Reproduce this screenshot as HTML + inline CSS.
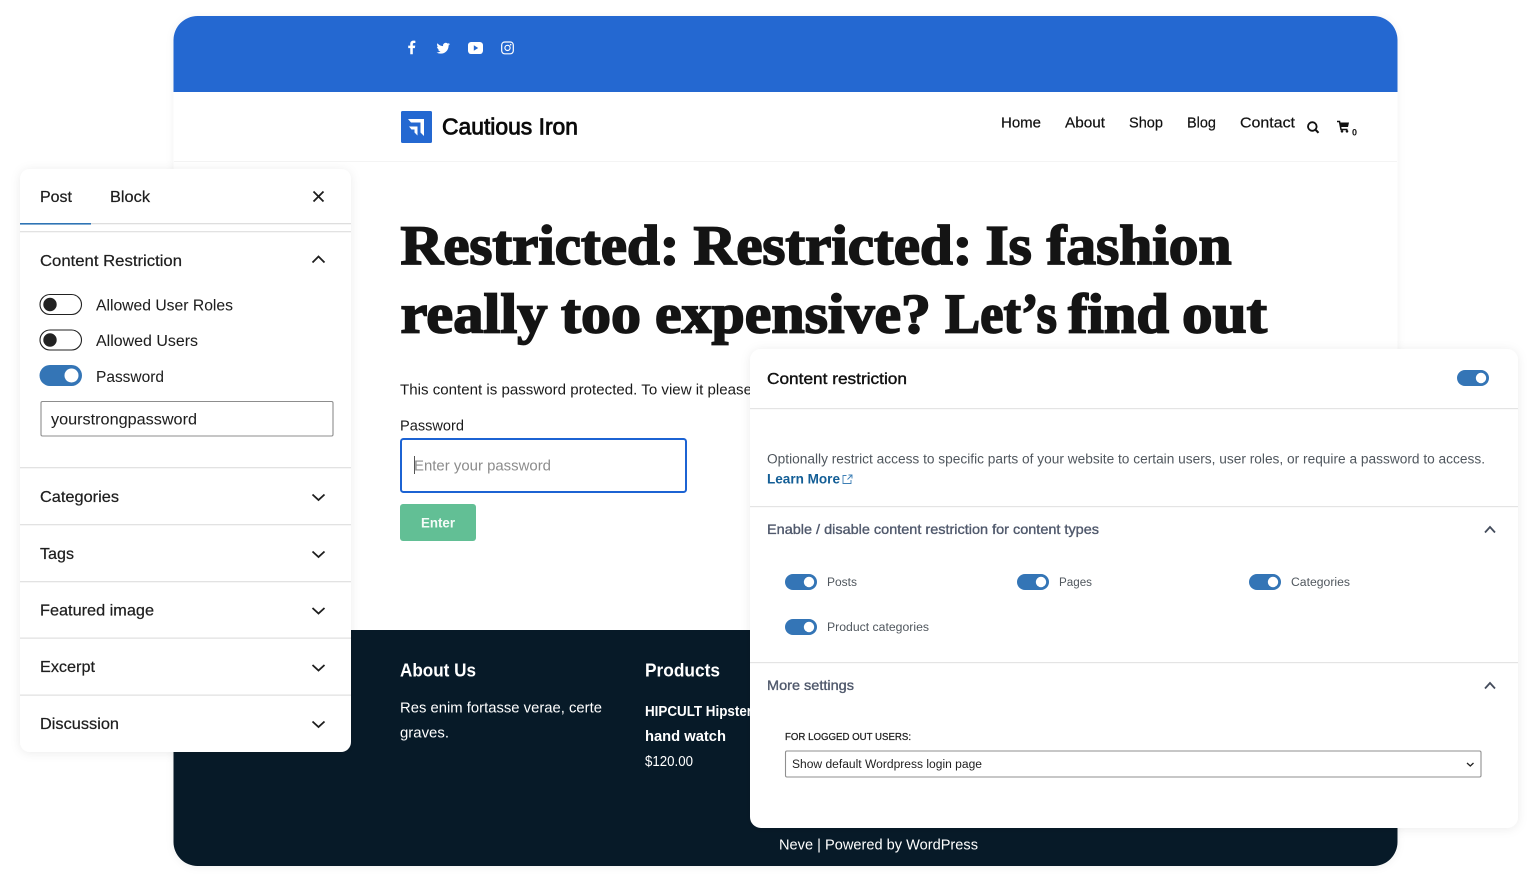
<!DOCTYPE html>
<html lang="en">
<head>
<meta charset="utf-8">
<title>Cautious Iron</title>
<style>
html,body{margin:0;padding:0;background:#fff;width:1536px;height:888px;overflow:hidden}
svg{display:block}
text{font-family:"Liberation Sans",sans-serif;fill:#1a1a1a}
.h{font-family:"Liberation Serif",serif;font-weight:700;font-size:56px;fill:#141414;stroke:#141414;stroke-width:1.7px}
.nav{font-size:15px;fill:#111;stroke:#111;stroke-width:.2px}
.p{font-size:16px;fill:#1e1e1e;stroke:#1e1e1e;stroke-width:.22px}
.w{fill:#fff}
.g{fill:#50575e}
.s{fill:#50596c;font-size:14px;stroke:#50596c;stroke-width:.35px}
.c{fill:none;stroke:#1e1e1e;stroke-width:1.8}
.c2{fill:none;stroke:#444c5c;stroke-width:1.8}
</style>
</head>
<body>
<svg width="1536" height="888" viewBox="0 0 1536 888" xmlns="http://www.w3.org/2000/svg">
<defs>
<filter id="sh" x="-10%" y="-10%" width="120%" height="120%"><feDropShadow dx="0" dy="1" stdDeviation="5" flood-color="#000" flood-opacity=".08"/></filter>
<filter id="sh2" x="-5%" y="-5%" width="110%" height="110%"><feDropShadow dx="0" dy="1" stdDeviation="4" flood-color="#000" flood-opacity=".06"/></filter>
</defs>

<!-- Site card -->
<rect x="173.500" y="16" width="1224" height="850" rx="24" fill="#fff" filter="url(#sh2)"/>
<path d="M173.500 92V40a24 24 0 0 1 24-24H1373.500a24 24 0 0 1 24 24V92z" fill="#2468d1"/>
<path d="M173.500 630H1397.500V842a24 24 0 0 1-24 24H197.500a24 24 0 0 1-24-24z" fill="#071a28"/>
<rect x="174" y="161" width="1223" height="1" fill="#f4f4f4"/>

<!-- Social icons -->
<path transform="translate(403.500 40) scale(.98)" fill="#fff" d="M9.500 14.500V8.300h2.100l.4-2.500H9.500V4.300c0-.8.2-1.300 1.300-1.300h1.300V.8C11.800.8 11 .7 10.100.7 8.200.7 6.900 1.900 6.900 4v1.800H4.800v2.500h2.100v6.200z"/>
<path transform="translate(436.500 41.500) scale(.56)" fill="#fff" d="M23.950 4.570a10 10 0 0 1-2.820.77 4.960 4.960 0 0 0 2.160-2.720 9.900 9.900 0 0 1-3.120 1.180 4.920 4.920 0 0 0-8.380 4.480A13.980 13.980 0 0 1 1.640 3.160a4.920 4.920 0 0 0 1.520 6.570 4.900 4.900 0 0 1-2.230-.61v.06a4.920 4.920 0 0 0 3.950 4.830 5 5 0 0 1-2.210.08 4.940 4.940 0 0 0 4.600 3.420A9.870 9.870 0 0 1 0 19.540a13.940 13.940 0 0 0 7.550 2.210c9.050 0 14-7.500 14-13.980 0-.21 0-.42-.02-.63a9.940 9.940 0 0 0 2.460-2.550z"/>
<rect x="468" y="42" width="15" height="12" rx="3.200" fill="#fff"/>
<path d="M473.800 45.300v5.400l4.400-2.700z" fill="#2468d1"/>
<rect x="501.700" y="42" width="11.600" height="11.800" rx="3" fill="none" stroke="#fff" stroke-width="1.200"/>
<circle cx="507.500" cy="47.900" r="2.600" fill="none" stroke="#fff" stroke-width="1.200"/>
<circle cx="510.700" cy="44.700" r=".8" fill="#fff"/>

<!-- Logo -->
<rect x="401" y="111" width="31" height="32" rx="1.500" fill="#2468d1"/>
<path d="M408 119H424V136L420.500 132.500V122.500H411z" fill="#fff"/>
<path d="M409 126.500H417.500V135.500L414.500 132.500V129.500H411.500z" fill="#fff"/>
<text x="442" y="134.500" font-size="23" textLength="136" lengthAdjust="spacingAndGlyphs" style="fill:#0b0b0b;stroke:#0b0b0b;stroke-width:.8px">Cautious Iron</text>

<!-- Nav -->
<text class="nav" x="1001" y="127.500" textLength="40" lengthAdjust="spacingAndGlyphs">Home</text>
<text class="nav" x="1065" y="127.500" textLength="40" lengthAdjust="spacingAndGlyphs">About</text>
<text class="nav" x="1129" y="127.500" textLength="34" lengthAdjust="spacingAndGlyphs">Shop</text>
<text class="nav" x="1187" y="127.500" textLength="29" lengthAdjust="spacingAndGlyphs">Blog</text>
<text class="nav" x="1240" y="127.500" textLength="55" lengthAdjust="spacingAndGlyphs">Contact</text>
<circle cx="1312.300" cy="126.500" r="4.300" fill="none" stroke="#111" stroke-width="1.800"/>
<path d="M1315.300 129.500L1318.500 132.800" stroke="#111" stroke-width="2.100" fill="none"/>
<path d="M1337 121.500H1339.500L1341 129.500H1347.500" fill="none" stroke="#111" stroke-width="1.500"/>
<path d="M1340 122.500H1349L1348 127H1341z" fill="#111"/>
<circle cx="1342" cy="131.300" r="1.300" fill="#111"/>
<circle cx="1347" cy="131.300" r="1.300" fill="#111"/>
<text x="1352" y="135.500" font-size="9" font-weight="700" style="fill:#111">0</text>

<!-- Heading -->
<text class="h" x="400.500" y="264" textLength="279" lengthAdjust="spacingAndGlyphs">Restricted:</text>
<text class="h" x="693.500" y="264" textLength="279" lengthAdjust="spacingAndGlyphs">Restricted:</text>
<text class="h" x="985.500" y="264" textLength="246" lengthAdjust="spacingAndGlyphs">Is fashion</text>
<text class="h" x="400.500" y="332.500" textLength="147" lengthAdjust="spacingAndGlyphs">really</text>
<text class="h" x="561" y="332.500" textLength="80" lengthAdjust="spacingAndGlyphs">too</text>
<text class="h" x="655" y="332.500" textLength="276" lengthAdjust="spacingAndGlyphs">expensive?</text>
<text class="h" x="945" y="332.500" textLength="112" lengthAdjust="spacingAndGlyphs">Let’s</text>
<text class="h" x="1068" y="332.500" textLength="101" lengthAdjust="spacingAndGlyphs">find</text>
<text class="h" x="1182" y="332.500" textLength="85" lengthAdjust="spacingAndGlyphs">out</text>

<!-- Password form -->
<text x="400" y="394.500" font-size="14.500" textLength="352" lengthAdjust="spacingAndGlyphs" style="fill:#1a1a1a">This content is password protected. To view it please</text>
<text x="400" y="430.500" font-size="14.500" textLength="64" lengthAdjust="spacingAndGlyphs" style="fill:#1a1a1a">Password</text>
<rect x="401" y="439" width="285" height="53" rx="2.500" fill="#fff" stroke="#1c63d3" stroke-width="2"/>
<rect x="414" y="456" width="1" height="18" fill="#555"/>
<text x="414" y="470.500" font-size="14.500" textLength="137" lengthAdjust="spacingAndGlyphs" style="fill:#8c8c8c">Enter your password</text>
<rect x="400" y="504" width="76" height="37" rx="3" fill="#62bf95"/>
<text x="421" y="527.500" font-size="14" font-weight="700" textLength="34" lengthAdjust="spacingAndGlyphs" class="w" style="fill:#f4fbf7">Enter</text>

<!-- Footer -->
<text class="w" x="400" y="676.500" font-size="18" font-weight="700" textLength="76" lengthAdjust="spacingAndGlyphs">About Us</text>
<text class="w" x="645" y="676.500" font-size="18" font-weight="700" textLength="75" lengthAdjust="spacingAndGlyphs">Products</text>
<text class="w" x="400" y="712.500" font-size="14.500" textLength="202" lengthAdjust="spacingAndGlyphs">Res enim fortasse verae, certe</text>
<text class="w" x="400" y="737.500" font-size="14.500" textLength="49" lengthAdjust="spacingAndGlyphs">graves.</text>
<text class="w" x="645" y="716" font-size="14.500" font-weight="700" textLength="107" lengthAdjust="spacingAndGlyphs">HIPCULT Hipster</text>
<text class="w" x="645" y="741" font-size="14.500" font-weight="700" textLength="81" lengthAdjust="spacingAndGlyphs">hand watch</text>
<text class="w" x="645" y="766" font-size="14.500" textLength="48" lengthAdjust="spacingAndGlyphs">$120.00</text>
<text class="w" x="779" y="849.500" font-size="14.500" textLength="199" lengthAdjust="spacingAndGlyphs">Neve | Powered by WordPress</text>

<!-- Left panel -->
<rect x="20" y="169" width="331" height="583" rx="10" fill="#fff" filter="url(#sh)"/>
<text class="p" x="40" y="202" textLength="32" lengthAdjust="spacingAndGlyphs">Post</text>
<text class="p" x="110" y="202" textLength="40" lengthAdjust="spacingAndGlyphs">Block</text>
<path d="M313.500 191.500L323.500 201.500M323.500 191.500L313.500 201.500" class="c"/>
<rect x="20" y="223" width="331" height="1.300" fill="#dedede"/>
<rect x="20" y="223" width="71" height="1.600" fill="#2f74b5"/>
<rect x="20" y="231" width="331" height="1.300" fill="#e2e2e2"/>
<text class="p" x="40" y="266" textLength="142" lengthAdjust="spacingAndGlyphs">Content Restriction</text>
<path d="M312.500 262.500L318.500 256.500L324.500 262.500" class="c"/>

<rect x="40" y="294.500" width="41.500" height="20" rx="10" fill="#fff" stroke="#222" stroke-width="1.100"/>
<circle cx="50" cy="304.500" r="6.700" fill="#222"/>
<text class="p" x="96" y="310.500" textLength="137" lengthAdjust="spacingAndGlyphs" style="stroke-width:.05px">Allowed User Roles</text>
<rect x="40" y="330" width="41.500" height="20" rx="10" fill="#fff" stroke="#222" stroke-width="1.100"/>
<circle cx="50" cy="340" r="6.700" fill="#222"/>
<text class="p" x="96" y="346" textLength="102" lengthAdjust="spacingAndGlyphs" style="stroke-width:.05px">Allowed Users</text>
<rect x="39.500" y="365" width="42.500" height="21" rx="10.500" fill="#3475b6"/>
<circle cx="71.500" cy="375.500" r="7" fill="#fff"/>
<text class="p" x="96" y="382" textLength="68" lengthAdjust="spacingAndGlyphs" style="stroke-width:.05px">Password</text>
<rect x="41" y="401.500" width="292" height="34.500" rx="1.500" fill="#fff" stroke="#8d8d8d" stroke-width="1.100"/>
<text class="p" x="51" y="424.500" textLength="146" lengthAdjust="spacingAndGlyphs" style="stroke-width:.05px">yourstrongpassword</text>

<rect x="20" y="467" width="331" height="1.300" fill="#e2e2e2"/>
<text class="p" x="40" y="502" textLength="79" lengthAdjust="spacingAndGlyphs">Categories</text>
<path d="M312.500 494.500L318.500 500L324.500 494.500" class="c"/>
<rect x="20" y="524" width="331" height="1.300" fill="#e2e2e2"/>
<text class="p" x="40" y="559" textLength="34" lengthAdjust="spacingAndGlyphs">Tags</text>
<path d="M312.500 551.500L318.500 557L324.500 551.500" class="c"/>
<rect x="20" y="581" width="331" height="1.300" fill="#e2e2e2"/>
<text class="p" x="40" y="615.500" textLength="114" lengthAdjust="spacingAndGlyphs">Featured image</text>
<path d="M312.500 608L318.500 613.500L324.500 608" class="c"/>
<rect x="20" y="637.500" width="331" height="1.300" fill="#e2e2e2"/>
<text class="p" x="40" y="672" textLength="55" lengthAdjust="spacingAndGlyphs">Excerpt</text>
<path d="M312.500 665L318.500 670.500L324.500 665" class="c"/>
<rect x="20" y="694.500" width="331" height="1.300" fill="#e2e2e2"/>
<text class="p" x="40" y="729" textLength="79" lengthAdjust="spacingAndGlyphs">Discussion</text>
<path d="M312.500 721.500L318.500 727L324.500 721.500" class="c"/>

<!-- Right panel -->
<rect x="750" y="349" width="768" height="479" rx="11" fill="#fff" filter="url(#sh)"/>
<text x="767" y="384" font-size="16" textLength="140" lengthAdjust="spacingAndGlyphs" style="fill:#111;stroke:#111;stroke-width:.4px">Content restriction</text>
<rect x="1457" y="370" width="32" height="16" rx="8" fill="#3475b6"/>
<circle cx="1481" cy="378" r="5.200" fill="#fff"/>
<rect x="750" y="408" width="768" height="1.200" fill="#e4e4e4"/>
<text class="g" x="767" y="463.500" font-size="13.500" textLength="718" lengthAdjust="spacingAndGlyphs">Optionally restrict access to specific parts of your website to certain users, user roles, or require a password to access.</text>
<text x="767" y="483.500" font-size="13.500" font-weight="700" textLength="73" lengthAdjust="spacingAndGlyphs" style="fill:#135e96">Learn More</text>
<path d="M846.500 475.500H843V483.500H851V480M847.500 479.500L851.500 475.500M848.500 475H852V478.500" fill="none" stroke="#3d7fb5" stroke-width=".9"/>
<rect x="750" y="506" width="768" height="1.200" fill="#e4e4e4"/>
<text class="s" x="767" y="534" textLength="332" lengthAdjust="spacingAndGlyphs">Enable / disable content restriction for content types</text>
<path d="M1485 532.500L1490 527L1495 532.500" class="c2"/>

<rect x="785" y="574" width="32" height="16" rx="8" fill="#3475b6"/>
<circle cx="809" cy="582" r="5.200" fill="#fff"/>
<text class="g" x="827" y="586" font-size="11.500" textLength="30" lengthAdjust="spacingAndGlyphs">Posts</text>
<rect x="1017" y="574" width="32" height="16" rx="8" fill="#3475b6"/>
<circle cx="1041" cy="582" r="5.200" fill="#fff"/>
<text class="g" x="1059" y="586" font-size="11.500" textLength="33" lengthAdjust="spacingAndGlyphs">Pages</text>
<rect x="1249" y="574" width="32" height="16" rx="8" fill="#3475b6"/>
<circle cx="1273" cy="582" r="5.200" fill="#fff"/>
<text class="g" x="1291" y="586" font-size="11.500" textLength="59" lengthAdjust="spacingAndGlyphs">Categories</text>
<rect x="785" y="619" width="32" height="16" rx="8" fill="#3475b6"/>
<circle cx="809" cy="627" r="5.200" fill="#fff"/>
<text class="g" x="827" y="631" font-size="11.500" textLength="102" lengthAdjust="spacingAndGlyphs">Product categories</text>

<rect x="750" y="662" width="768" height="1.200" fill="#e4e4e4"/>
<text class="s" x="767" y="690" textLength="87" lengthAdjust="spacingAndGlyphs">More settings</text>
<path d="M1485 688.500L1490 683L1495 688.500" class="c2"/>
<text x="785" y="740" font-size="10" textLength="126" lengthAdjust="spacingAndGlyphs" style="fill:#222;stroke:#222;stroke-width:.25px">FOR LOGGED OUT USERS:</text>
<rect x="785.500" y="751" width="695.500" height="26" rx="1.500" fill="#fff" stroke="#8f8f8f" stroke-width="1.100"/>
<text x="792" y="768" font-size="11.500" textLength="190" lengthAdjust="spacingAndGlyphs" style="fill:#222">Show default Wordpress login page</text>
<path d="M1467 763L1470.300 766L1473.500 763" fill="none" stroke="#222" stroke-width="1.300"/>
</svg>
</body>
</html>
